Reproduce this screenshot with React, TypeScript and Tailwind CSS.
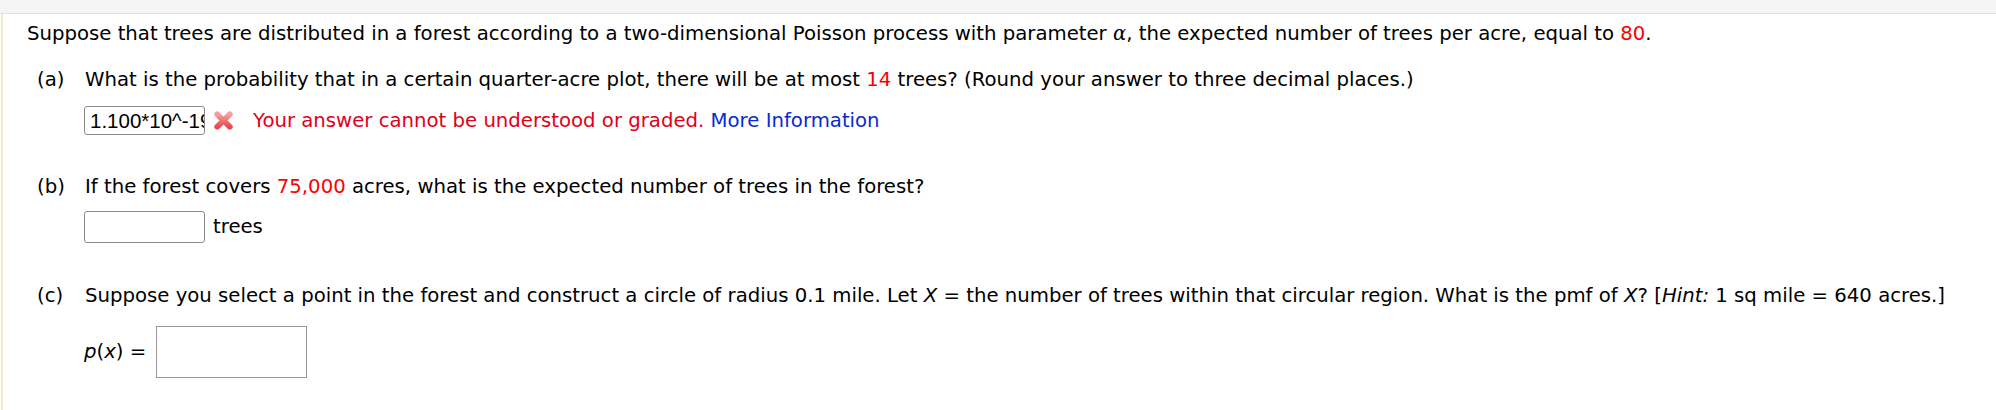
import React from 'react';

const Red: React.FC<{ children: React.ReactNode }> = ({ children }) => (
  <span className="text-[#ff0000]">{children}</span>
);

const WrongMark: React.FC = () => (
  <svg width="21" height="21" viewBox="0 0 20 20" className="shrink-0">
    <defs>
      <linearGradient id="xg" x1="0" y1="0" x2="0" y2="1">
        <stop offset="0" stopColor="#f7a0a0" />
        <stop offset="1" stopColor="#e84a4a" />
      </linearGradient>
    </defs>
    <path d="M4 4 L16 16 M16 4 L4 16" stroke="url(#xg)" strokeWidth="5.5" strokeLinecap="round" />
  </svg>
);

const Label: React.FC<{ children: React.ReactNode }> = ({ children }) => (
  <span className="w-[48px] shrink-0">{children}</span>
);

export default function App() {
  return (
    <div className="w-[1996px] h-[410px] bg-white text-black text-[19.7px] font-['DejaVu_Sans',Verdana,sans-serif] flex flex-col">
      {/* top strip */}
      <div className="h-[14px] shrink-0 bg-[#f5f5f5] border-b border-[#e2e2e2]" />

      <div className="flex-1 ml-px border-l-2 border-[#f2edbf] pl-[24px] pt-[8px] flex flex-col">
        <p className="leading-[24px] whitespace-nowrap">
          Suppose that trees are distributed in a forest according to a two-dimensional Poisson process with
          parameter <i className="font-['DejaVu_Serif',serif]">α</i>, the expected number of trees per acre, equal to{' '}
          <Red>80</Red>.
        </p>

        {/* (a) */}
        <div className="mt-[22px] pl-[10px] flex leading-[24px] whitespace-nowrap">
          <Label>(a)</Label>
          <span>
            What is the probability that in a certain quarter-acre plot, there will be at most <Red>14</Red> trees?
            (Round your answer to three decimal places.)
          </span>
        </div>
        <div className="mt-[14px] pl-[57px] flex items-center gap-[8px] h-[29px]">
          <div className="w-[121px] h-[29px] border border-[#8a8a8a] rounded-[3px] pl-[5px] overflow-hidden whitespace-nowrap text-[20.5px] leading-[27px] font-['Liberation_Sans',Arial,sans-serif]">
            1.100*10^-19
          </div>
          <WrongMark />
          <span className="ml-[11px] text-[#e0001b] whitespace-nowrap leading-[24px]">
            Your answer cannot be understood or graded.{' '}
            <a className="text-[#0a2ad0]">More Information</a>
          </span>
        </div>

        {/* (b) */}
        <div className="mt-[40px] pl-[10px] flex leading-[24px] whitespace-nowrap">
          <Label>(b)</Label>
          <span>
            If the forest covers <Red>75,000</Red> acres, what is the expected number of trees in the forest?
          </span>
        </div>
        <div className="mt-[12px] pl-[57px] flex items-center gap-[8px]">
          <div className="w-[121px] h-[32px] border border-[#8a8a8a] rounded-[3px]" />
          <span className="leading-[24px]">trees</span>
        </div>

        {/* (c) */}
        <div className="mt-[41px] pl-[10px] flex leading-[24px] whitespace-nowrap">
          <Label>(c)</Label>
          <span>
            Suppose you select a point in the forest and construct a circle of radius 0.1 mile. Let <i>X</i> = the
            number of trees within that circular region. What is the pmf of <i>X</i>? [<i>Hint:</i> 1 sq mile = 640
            acres.]
          </span>
        </div>
        <div className="mt-[18px] pl-[57px] flex items-center">
          <span className="w-[72px] shrink-0 leading-[24px]">
            <i>p</i>(<i>x</i>) =
          </span>
          <div className="w-[151px] h-[52px] border border-[#9a9a9a]" />
        </div>
      </div>
    </div>
  );
}
